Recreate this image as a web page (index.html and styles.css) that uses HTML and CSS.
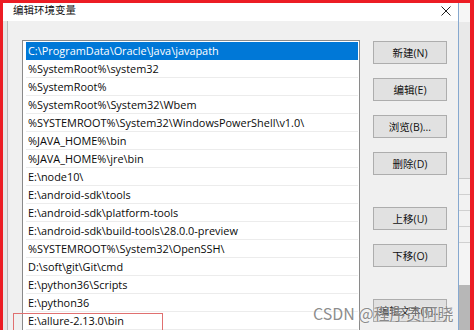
FILE: index.html
```html
<!DOCTYPE html>
<html>
<head>
<meta charset="utf-8">
<link rel="stylesheet" href="styles.css">
</head>
<body>
<div class="screen">
  <div class="dialog">
    <div class="titlebar">
      <span class="title">编辑环境变量</span>
      <svg class="close" width="10" height="10" viewBox="0 0 10 10"><path d="M0.5 0.5 L9.5 9.5 M9.5 0.5 L0.5 9.5" stroke="#222" stroke-width="1" fill="none"/></svg>
    </div>
    <div class="body">
      <div class="leftstrip"></div>
      <div class="content">
        <div class="list">
          <div class="row selected">C:\ProgramData\Oracle\Java\javapath</div>
          <div class="row">%SystemRoot%\system32</div>
          <div class="row">%SystemRoot%</div>
          <div class="row">%SystemRoot%\System32\Wbem</div>
          <div class="row">%SYSTEMROOT%\System32\WindowsPowerShell\v1.0\</div>
          <div class="row">%JAVA_HOME%\bin</div>
          <div class="row">%JAVA_HOME%\jre\bin</div>
          <div class="row">E:\node10\</div>
          <div class="row">E:\android-sdk\tools</div>
          <div class="row">E:\android-sdk\platform-tools</div>
          <div class="row">E:\android-sdk\build-tools\28.0.0-preview</div>
          <div class="row">%SYSTEMROOT%\System32\OpenSSH\</div>
          <div class="row">D:\soft\git\Git\cmd</div>
          <div class="row">E:\python36\Scripts</div>
          <div class="row">E:\python36</div>
          <div class="row">E:\allure-2.13.0\bin</div>
        </div>
        <div class="buttons">
          <div class="btn">新建(N)</div>
          <div class="btn">编辑(E)</div>
          <div class="btn">浏览(B)...</div>
          <div class="btn">删除(D)</div>
          <div class="btn spaced">上移(U)</div>
          <div class="btn">下移(O)</div>
          <div class="btn spaced">编辑文本(T)...</div>
        </div>
      </div>
    </div>
  </div>
  <div class="behind">
    <div class="b-top"></div>
    <div class="b-mid"></div>
    <div class="b-line"></div>
    <div class="b-line"></div>
    <div class="b-line"></div>
    <div class="b-line"></div>
    <div class="b-gap"></div>
    <div class="b-dark"></div>
  </div>
</div>
<div class="annot"></div>
<div class="watermark">CSDN @程序员阿晓</div>
</body>
</html>
```

FILE: styles.css
```css
html, body {
  margin: 0;
  padding: 0;
}
body {
  width: 474px;
  height: 330px;
  overflow: hidden;
  background: #ec1c24;
  position: relative;
  font-family: "Open Sans", "Noto Sans CJK SC", sans-serif;
}
.screen {
  display: flex;
  margin: 3px 4px 0 3px;
  height: 327px;
}
.dialog {
  width: 455px;
  border-right: 1px solid #86a8cf;
  background: #f0f0f0;
  display: flex;
  flex-direction: column;
}
.titlebar {
  height: 19px;
  background: #ffffff;
  display: flex;
  align-items: center;
  justify-content: space-between;
  padding: 0 7px 3px 10px;
  box-sizing: border-box;
}
.title {
  font-family: "Noto Sans CJK SC", sans-serif;
  font-size: 10.5px;
  color: #111;
  line-height: 1;
}
.close {
  display: block;
}
.body {
  flex: 1;
  display: flex;
}
.leftstrip {
  width: 4px;
  background: #e6e6e6;
  border-right: 1px solid #b9b9b9;
}
.content {
  flex: 1;
  display: flex;
  align-items: flex-start;
  padding: 19px 0 0 14px;
}
.list {
  width: 332px;
  background: #fff;
  border: 1px solid #8a8a8a;
  border-bottom: none;
  padding: 1px 1px 0 3px;
}
.row {
  height: 18px;
  box-sizing: border-box;
  border-bottom: 1px solid #ececec;
  padding-left: 2px;
  font-size: 10.9px;
  line-height: 17px;
  color: #0a0a0a;
  white-space: nowrap;
}
.row.selected {
  background: #0078d7;
  color: #fff;
  border-bottom-color: #0078d7;
}
.buttons {
  margin-left: 13px;
  display: flex;
  flex-direction: column;
  gap: 14px;
  padding-top: 1px;
}
.btn {
  width: 74px;
  height: 23px;
  box-sizing: border-box;
  border: 1px solid #adadad;
  background: #e1e1e1;
  font-size: 10.5px;
  display: flex;
  align-items: center;
  justify-content: center;
  color: #111;
}
.btn.spaced {
  margin-top: 18px;
}
.behind {
  flex: 1;
  display: flex;
  flex-direction: column;
  background: #e9e9e9;
}
.b-top {
  height: 19px;
  background: #f6f6f6;
}
.b-mid {
  height: 156px;
  border-bottom: 1px solid #c8c8c8;
}
.b-line {
  height: 15px;
  border-bottom: 1px solid #d0d0d0;
  background: #f2f2f2;
}
.b-gap {
  height: 42px;
  background: #f4f4f4;
}
.b-dark {
  flex: 1;
  background: #b7b7b7;
}
.annot {
  position: absolute;
  left: 13px;
  top: 313px;
  width: 150px;
  height: 30px;
  border: 1px solid #e07070;
  box-sizing: border-box;
}
.watermark {
  position: absolute;
  left: 313px;
  top: 303px;
  font-family: "Noto Sans CJK SC", sans-serif;
  font-size: 16px;
  line-height: 20px;
  color: rgba(110, 110, 110, 0.8);
  text-shadow: 0 0 2px rgba(255, 255, 255, 0.9);
  white-space: nowrap;
}
```
